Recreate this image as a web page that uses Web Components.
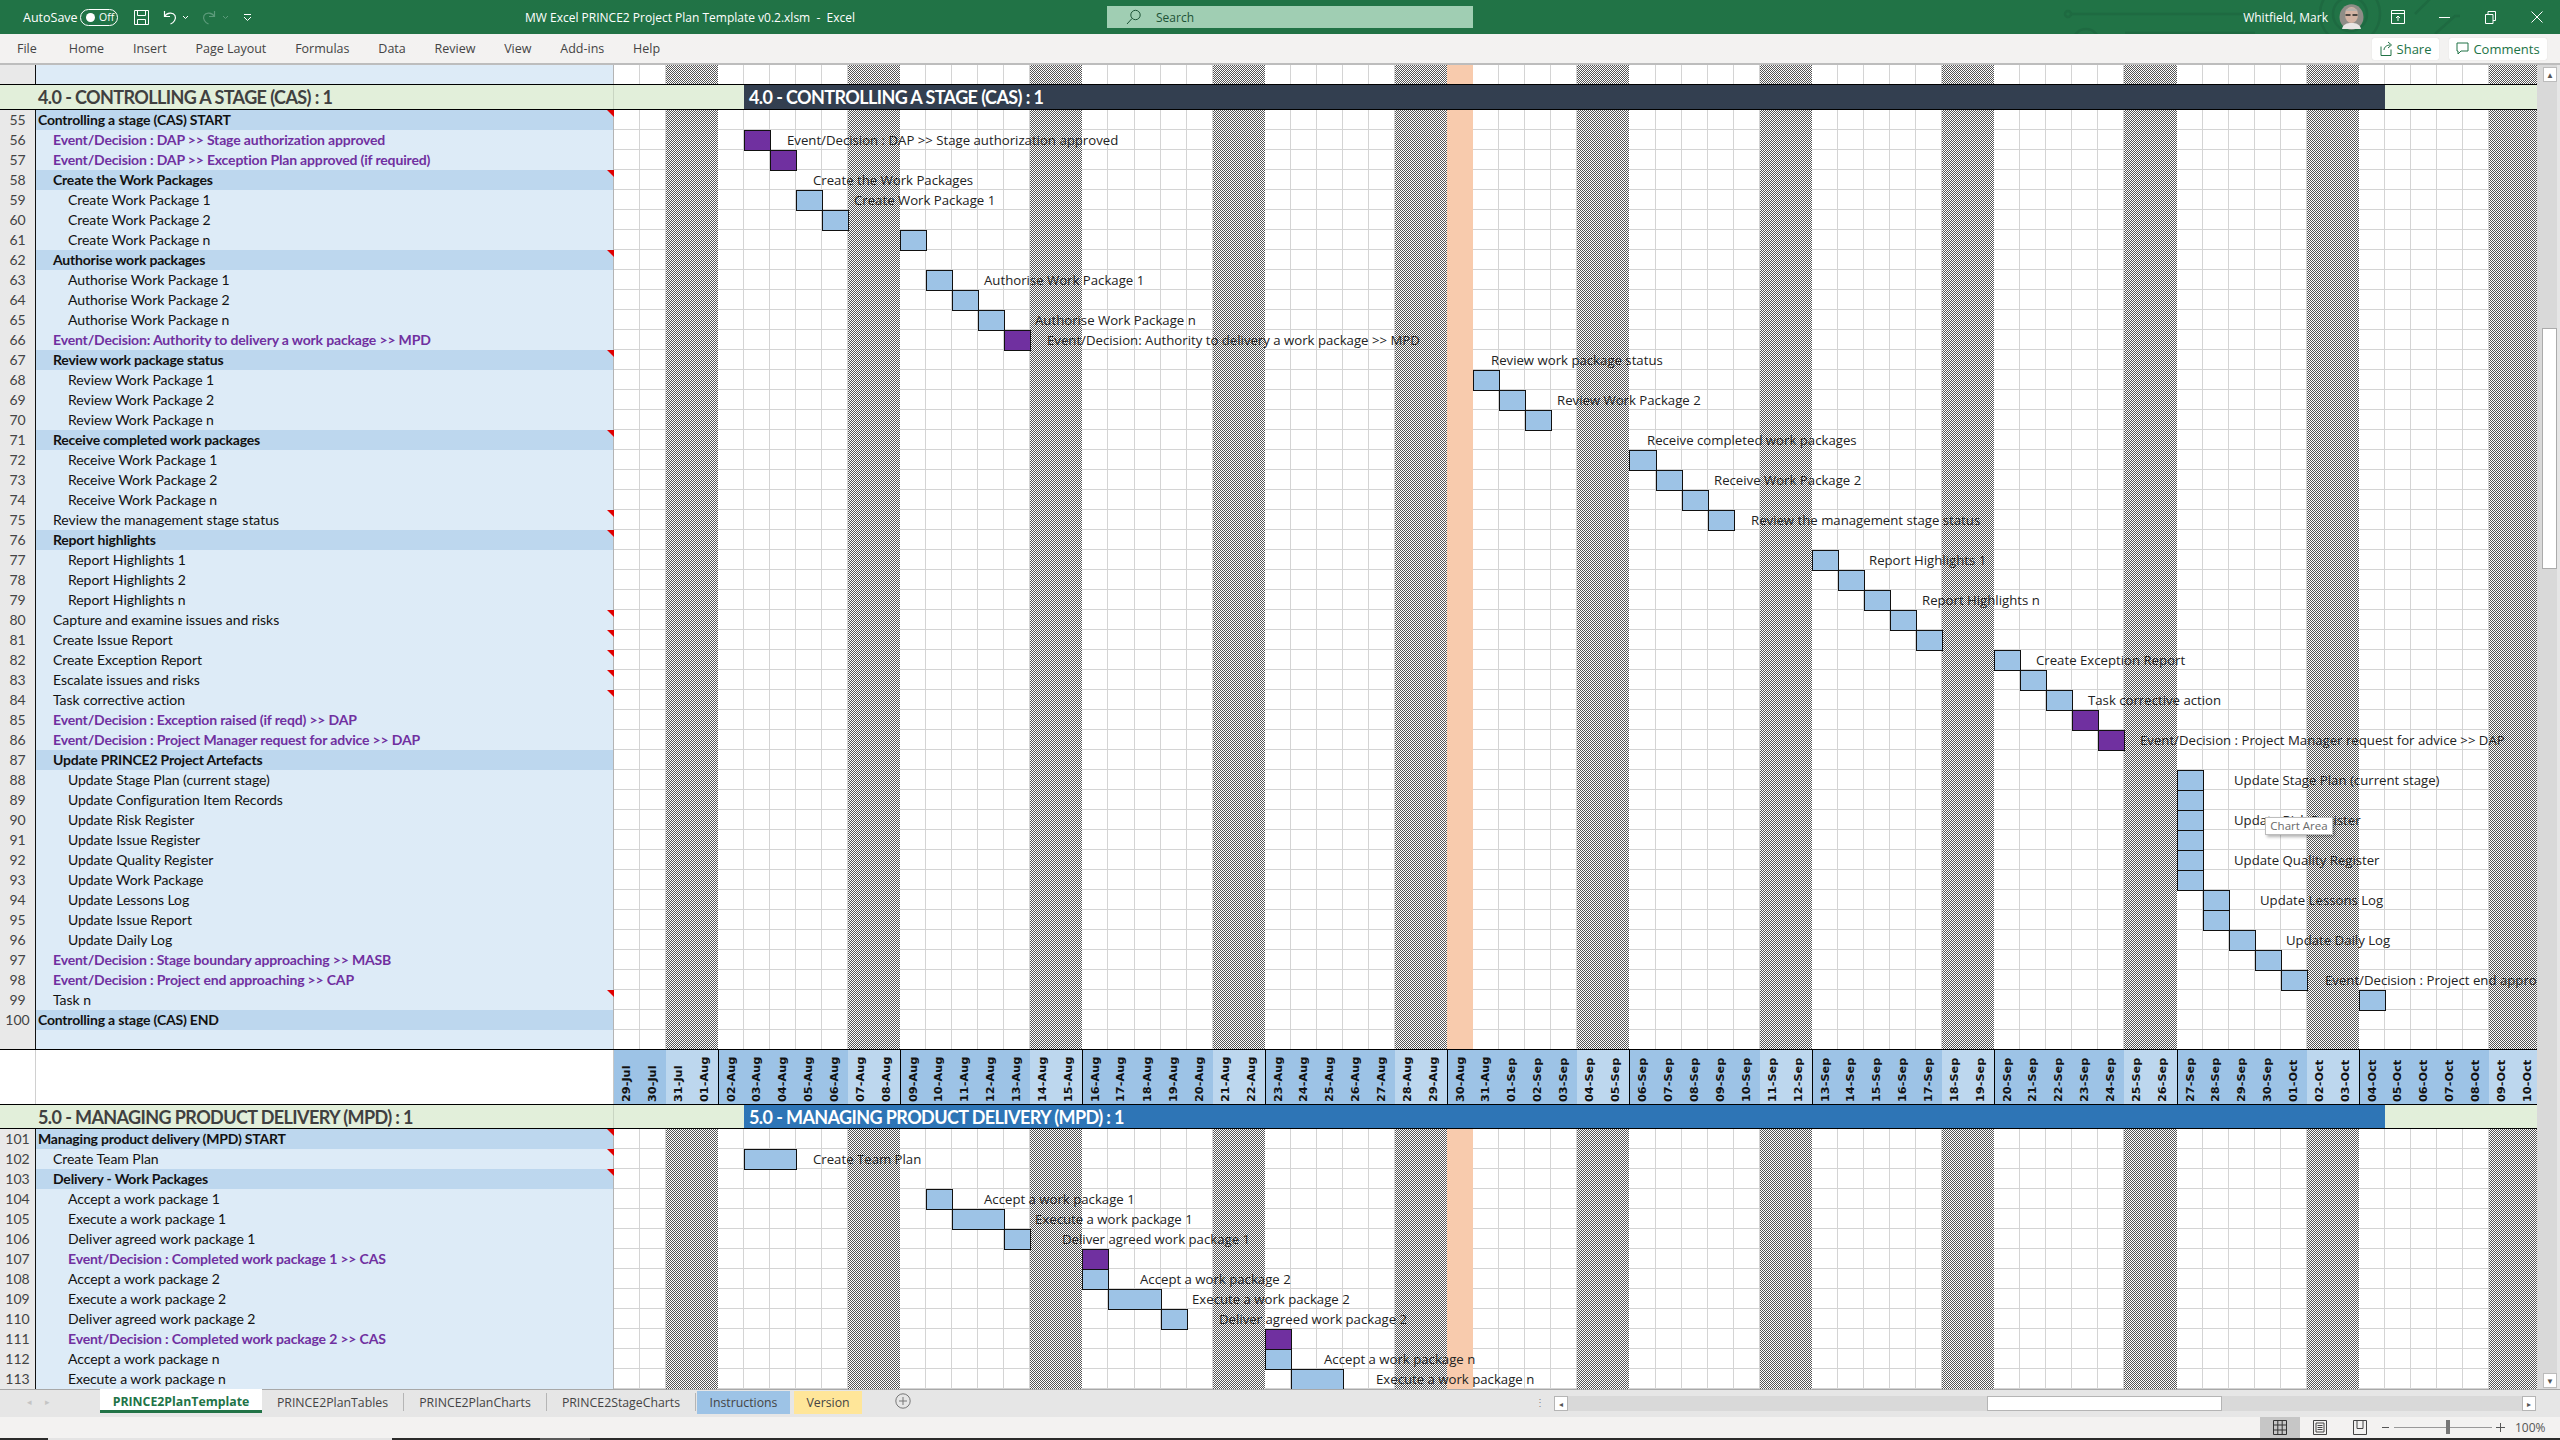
<!DOCTYPE html>
<html>
<head>
<meta charset="utf-8">
<title>MW Excel PRINCE2 Project Plan Template</title>
<style>
  html, body { margin: 0; padding: 0; width: 2560px; height: 1440px; overflow: hidden; background: #f3f2f1; }
  body { font-family: "Open Sans", sans-serif; display: flex; flex-direction: column; }
</style>
</head>
<body>
<script>
// column edges of the gantt grid, excel rounds these a bit unevenly
const COL_W = 26.05, COL_X0 = 613.5, COL_COUNT = 74;
const colTracks = [];
for (let i = 0; i < COL_COUNT; i++) {
  colTracks.push(Math.round(COL_X0 + (i + 1) * COL_W) - Math.round(COL_X0 + i * COL_W) + 'px');
}
const TRACKS = colTracks.join(' ');
const isWeekend = i => i % 7 === 2 || i % 7 === 3;
const GREY = 'repeating-conic-gradient(#555 0 25%, #fff 0 50%) 0 0 / 2px 2px';

function shadow(el, html) {
  el.attachShadow({ mode: 'open' }).innerHTML = html;
}

class ExcelTitlebar extends HTMLElement {
  constructor() {
    super();
    shadow(this, `<style>
      :host { display: flex; align-items: center; height: 34px; background: #217346; color: #fff; position: relative; flex: none; font: 12.5px "Open Sans", sans-serif; }
      .auto { margin-left: 23px; width: 57px; }
      .toggle { width: 36px; height: 15px; border: 1px solid #fff; border-radius: 9px; display: flex; align-items: center; font-size: 10.5px; }
      .toggle i { width: 9px; height: 9px; border-radius: 50%; background: #fff; margin: 0 4px 0 5px; }
      svg { display: block; flex: none; }
      .title { margin-left: 273px; width: 582px; white-space: pre; font-size: 12px; }
      .search { margin-left: 0; width: 366px; height: 22px; background: #a0ceb3; color: #1d5236; display: flex; align-items: center; font-size: 12px; }
      .search svg { margin: 0 14px 0 19px; }
      .user { margin-left: auto; font-size: 12px; white-space: nowrap; }
      .deco { position: absolute; left: 2040px; top: 0; }
      .right { display: flex; align-items: center; position: relative; margin-left: auto; }
      .avatar { margin-left: 11px; }
    </style>
    <span class="auto">AutoSave</span>
    <span class="toggle"><i></i>Off</span>
    <svg style="margin-left:15px" width="17" height="17" viewBox="0 0 17 17" fill="none" stroke="#fff"><path d="M1.5 1.5h14v14h-14z M4.5 1.5v5h8v-5 M4.5 15.5v-5h8v5"/></svg>
    <svg style="margin-left:11px" width="17" height="17" viewBox="0 0 17 17" fill="none" stroke="#fff" stroke-width="1.2"><path d="M3.5 2v5.5H9 M3.5 7.5C6 3.500 12 3 14 6.500c1.500 3.500-1 7-4.500 8.500"/></svg>
    <svg style="margin-left:4px" width="7" height="5" viewBox="0 0 7 5" fill="none" stroke="#fff"><path d="M1 1l2.500 2.500L6 1"/></svg>
    <svg style="margin-left:12px" width="17" height="17" viewBox="0 0 17 17" fill="none" stroke="#5d9b7b" stroke-width="1.2"><path d="M13.500 2v5.500H8 M13.500 7.500C11 3.500 5 3 3 6.500c-1.500 3.500 1 7 4.500 8.500"/></svg>
    <svg style="margin-left:4px" width="7" height="5" viewBox="0 0 7 5" fill="none" stroke="#5d9b7b"><path d="M1 1l2.500 2.500L6 1"/></svg>
    <svg style="margin-left:14px" width="9" height="9" viewBox="0 0 9 9" fill="none" stroke="#fff"><path d="M1 1.500h7 M1 4l3.500 3.500L8 4"/></svg>
    <span class="title">MW Excel PRINCE2 Project Plan Template v0.2.xlsm  -  Excel</span>
    <div class="search">
      <svg width="16" height="16" viewBox="0 0 16 16" fill="none" stroke="#1d5236"><circle cx="9.500" cy="6" r="4.700"/><path d="M6 9.500L1 15"/></svg>Search
    </div>
    <svg class="deco" width="420" height="34" viewBox="0 0 420 34" fill="none" stroke="#1e6a41" stroke-width="2.500">
      <circle cx="28" cy="14" r="3"/><path d="M31 14H210"/><circle cx="46" cy="42" r="13"/><path d="M85 33h130"/><circle cx="310" cy="14" r="30"/><circle cx="310" cy="14" r="17"/><path d="M395 34l20-18h10 M375 14l20-20"/>
    </svg>
    <div class="right">
      <span class="user">Whitfield, Mark</span>
      <svg class="avatar" width="25" height="26" viewBox="0 0 25 26">
        <ellipse cx="12.500" cy="13" rx="12" ry="12.800" fill="#8f8d87"/>
        <ellipse cx="12.500" cy="11" rx="6.500" ry="8" fill="#d3b3a3"/>
        <path d="M6 8c1-5 12-5 13 0l-1-1H7z" fill="#b5b0aa"/>
        <path d="M6.500 10h5v2h-5zM13.500 10h5v2h-5z" fill="#4b4642"/>
        <path d="M3 25c1-5 5-6 9.500-6s8.500 1 9.500 6z" fill="#e8e6e4"/>
      </svg>
      <svg style="margin-left:27px" width="14" height="14" viewBox="0 0 14 14" fill="none" stroke="#fff"><path d="M.5.500h13v13H.5z M.5 3.500h13 M7 11V6 M5 8l2-2 2 2"/></svg>
      <svg style="margin-left:34px" width="11" height="11" viewBox="0 0 11 11" stroke="#fff"><path d="M0 5.500h11"/></svg>
      <svg style="margin-left:35px" width="11" height="13" viewBox="0 0 11 13" fill="none" stroke="#fff"><path d="M.5 3.500h7.500v9H.5z M3 3.500V.5h7.500v9H8"/></svg>
      <svg style="margin-left:35px;margin-right:17px" width="12" height="12" viewBox="0 0 12 12" stroke="#fff"><path d="M.5.500l11 11 M11.500.500l-11 11"/></svg>
    </div>`);
  }
}

class ExcelRibbon extends HTMLElement {
  constructor() {
    super();
    const tabs = ['File','Home','Insert','Page Layout','Formulas','Data','Review','View','Add-ins','Help'];
    shadow(this, `<style>
      :host { display: flex; align-items: center; height: 31px; box-sizing: border-box; background: #f3f2f1; border-bottom: 2px solid #bdbdbd; flex: none; font: 12.5px "Open Sans", sans-serif; color: #444; padding-left: 17px; }
      span.t { margin-right: 28.800px; }
      span.t:first-of-type { margin-right: 32px; }
      .btn { background: #fff; border-radius: 2px; height: 22px; display: flex; align-items: center; color: #217346; font-size: 13px; box-shadow: 0 0 1px #c8c8c8; justify-content: center; gap: 4px; }
      .share { margin-left: auto; width: 67px; }
      .comments { margin-left: 10px; margin-right: 13px; width: 98px; }
    </style>
    ${tabs.map(t => `<span class="t">${t}</span>`).join('')}
    <div class="btn share"><svg width="13" height="15" viewBox="0 0 13 15" fill="none" stroke="#217346"><path d="M1 5.500v9h10v-6 M4 9c0-3 3-5 6-5 M8 1l3.500 3L8 7"/></svg>Share</div>
    <div class="btn comments"><svg width="13" height="14" viewBox="0 0 13 14" fill="none" stroke="#217346"><path d="M1 1h11v8H5l-3 3V9H1z"/></svg>Comments</div>`);
  }
}

class SheetView extends HTMLElement {
  constructor() {
    super();
    shadow(this, `<style>
      :host { display: flex; height: 1324px; flex: none; position: relative; overflow: hidden; }
      .main { width: 2537px; flex: none; display: flex; flex-direction: column; overflow: hidden; background: #fff; }
    </style>
    <div class="main"><slot></slot></div>
    <slot name="scroll"></slot>
    <slot name="over"></slot>`);
  }
}

class PlanBlock extends HTMLElement {
  constructor() {
    super();
    shadow(this, `<style>
      :host { display: flex; flex: none; }
      .tasks { width: 614px; flex: none; display: flex; flex-direction: column; }
    </style>
    <div class="tasks"><slot name="tasks"></slot></div>
    <slot></slot>`);
  }
}

class TaskRow extends HTMLElement {
  constructor() {
    super();
    shadow(this, `<style>
      :host { display: flex; height: 20px; flex: none; font: 14px Lato, sans-serif; letter-spacing: -.05px; color: #111; background: #ddebf7; position: relative; }
      :host([short]) { height: 19px; }
      :host([kind=band]) { background: #bdd7ee; font-weight: 700; letter-spacing: -.2px; }
      :host([kind=event]) { color: #7030a0; font-weight: 700; letter-spacing: -.16px; }
      .num { width: 36px; box-sizing: border-box; flex: none; background: #e9e9e9; border-right: 1px solid #111; text-align: center; color: #444; font-weight: 400; line-height: 20px; letter-spacing: 0; }
      .txt { line-height: 20px; white-space: nowrap; }
      .flag { position: absolute; right: 0; top: 0; width: 0; height: 0; border-top: 7px solid #e00000; border-left: 7px solid transparent; }
      .edge { position: absolute; right: 0; top: 0; bottom: 0; width: 1px; background: #b4b4b4; }
    </style><div class="num"></div><div class="txt"></div><div class="edge"></div>`);
  }
  connectedCallback() {
    const s = this.shadowRoot;
    s.querySelector('.num').textContent = this.getAttribute('num') || '';
    const txt = s.querySelector('.txt');
    txt.textContent = this.getAttribute('text') || '';
    txt.style.paddingLeft = [2, 17, 32][+this.getAttribute('level') || 0] + 'px';
    if (this.hasAttribute('flag')) {
      const f = document.createElement('div');
      f.className = 'flag';
      s.appendChild(f);
    }
  }
}

class GanttChart extends HTMLElement {
  constructor() {
    super();
    shadow(this, `<style>
      :host { display: block; flex: none; width: 1923px; overflow: hidden; }
      .g { display: grid; position: relative; grid-template-columns: ${TRACKS}; font: 13.200px "Open Sans", sans-serif; color: #222;
           background: repeating-linear-gradient(#fff 0 19px, #d4d4d4 19px 20px); }
      .c { grid-row: 1 / -1; box-sizing: border-box; border-right: 1px solid #d4d4d4; }
      .w { background: ${GREY}; border: 0; }
      .h { background: #f8cbad; border: 0; }
    </style><div class="g"><slot></slot></div>`);
  }
  connectedCallback() {
    const g = this.shadowRoot.querySelector('.g');
    const rows = +this.getAttribute('rows') || 0;
    const tail = +this.getAttribute('tail') || 0;
    g.style.gridTemplateRows = (rows ? `repeat(${rows}, 20px)` : '') + (tail ? ` ${tail}px` : '');
    for (let i = 0; i < COL_COUNT; i++) {
      const c = document.createElement('div');
      c.className = 'c' + (isWeekend(i) ? ' w' : i === 32 ? ' h' : '');
      c.style.gridColumn = i + 1;
      g.insertBefore(c, g.firstChild);
    }
  }
}

class GanttBar extends HTMLElement {
  constructor() {
    super();
    shadow(this, `<style>
      :host { display: block; box-sizing: border-box; background: #9dc3e6; border: 1px solid #111; margin: 0 -1px -1px 0; position: relative; }
      :host([kind=event]) { background: #7030a0; }
    </style>`);
  }
  connectedCallback() {
    const s = +this.getAttribute('start'), len = +this.getAttribute('len') || 1;
    this.style.gridRow = this.getAttribute('row');
    this.style.gridColumn = `${s + 1} / span ${len}`;
  }
}

class GanttLabel extends HTMLElement {
  constructor() {
    super();
    shadow(this, `<style>
      :host { display: block; white-space: nowrap; line-height: 20px; position: relative; }
    </style><slot></slot>`);
  }
  connectedCallback() {
    this.style.gridRow = this.getAttribute('row');
    this.style.gridColumn = '1 / -1';
    this.style.paddingLeft = (+this.getAttribute('x') - 614) + 'px';
  }
}

class SectionHead extends HTMLElement {
  constructor() {
    super();
    shadow(this, `<style>
      :host { display: flex; flex: none; box-sizing: border-box; width: 2537px; height: 26px; background: #e2efda; border-top: 1px solid #000; border-bottom: 1px solid #000; font: 700 18px Lato, sans-serif; letter-spacing: -.6px; overflow: hidden; }
      :host([short]) { height: 25px; }
      .l { width: 614px; box-sizing: border-box; flex: none; padding-left: 38px; color: #404040; border-right: 1px solid #c9d5c2; white-space: nowrap; line-height: 25px; }
      .g { display: grid; grid-template-columns: ${TRACKS}; flex: none; }
      .b { grid-column: 6 / span 63; color: #fff; padding-left: 5px; white-space: nowrap; line-height: 25px; }
    </style><div class="l"></div><div class="g"><div class="b"></div></div>`);
  }
  connectedCallback() {
    const s = this.shadowRoot, t = this.getAttribute('text');
    s.querySelector('.l').textContent = t;
    const b = s.querySelector('.b');
    b.textContent = t;
    b.style.background = this.getAttribute('color');
  }
}

class DateHead extends HTMLElement {
  constructor() {
    super();
    shadow(this, `<style>
      :host { display: flex; flex: none; box-sizing: border-box; width: 2537px; height: 55px; background: #fff; border-top: 1px solid #000; overflow: hidden; }
      .l { width: 614px; box-sizing: border-box; flex: none; border-right: 1px solid #c8c8c8; }
      .l div { width: 36px; height: 100%; box-sizing: border-box; border-right: 1px solid #d0d0d0; }
      .g { display: grid; grid-template-columns: ${TRACKS}; grid-template-rows: 54px; flex: none; font: 700 11.300px "DejaVu Sans", sans-serif; color: #111; }
      .d { background: #9dc3e6; box-sizing: border-box; overflow: hidden; }
      .d.w { background: #bdd7ee; }
      .d.s { border-left: 1px solid #000; }
      .d span { display: block; writing-mode: vertical-rl; transform: rotate(180deg); height: 54px; width: 100%; line-height: 26px; padding-top: 2px; box-sizing: border-box; white-space: nowrap; }
    </style><div class="l"><div></div></div><div class="g"></div>`);
  }
  connectedCallback() {
    const g = this.shadowRoot.querySelector('.g');
    const months = [['Jul', 29, 31], ['Aug', 1, 31], ['Sep', 1, 30], ['Oct', 1, 10]];
    let i = 0;
    months.forEach(([m, a, b]) => {
      for (let d = a; d <= b; d++, i++) {
        const c = document.createElement('div');
        c.className = 'd' + (isWeekend(i) ? ' w' : '') + (i % 7 === 4 ? ' s' : '');
        const sp = document.createElement('span');
        sp.textContent = String(d).padStart(2, '0') + '-' + m;
        c.appendChild(sp);
        g.appendChild(c);
      }
    });
  }
}

class VScroll extends HTMLElement {
  constructor() {
    super();
    shadow(this, `<style>
      :host { display: block; width: 23px; flex: none; background: linear-gradient(90deg, #d9d9d9 0 20px, #e6e6e6 20px); position: relative; }
      .b { position: absolute; left: 6px; width: 14px; height: 15px; box-sizing: border-box; background: #fff; border: 1px solid #bcbcbc; color: #555; font-size: 8px; line-height: 13px; text-align: center; }
      .up { top: 2px; } .dn { bottom: 1px; }
      .thumb { position: absolute; left: 5px; width: 15px; top: 263px; height: 241px; box-sizing: border-box; background: #fff; border: 1px solid #ababab; }
    </style><div class="b up">▲</div><div class="thumb"></div><div class="b dn">▼</div>`);
  }
}

class ChartTip extends HTMLElement {
  constructor() {
    super();
    shadow(this, `<style>
      :host { position: absolute; left: 2265px; top: 752px; width: 68px; height: 18px; box-sizing: border-box; background: #fff; border: 1px solid #bdbdbd; box-shadow: 2px 2px 3px rgba(0,0,0,.3); color: #6a6a6a; font: 11.500px "Open Sans", sans-serif; line-height: 16px; text-align: center; white-space: nowrap; }
    </style>Chart Area`);
  }
}

class SheetTabs extends HTMLElement {
  constructor() {
    super();
    shadow(this, `<style>
      :host { display: flex; height: 28px; box-sizing: border-box; flex: none; background: #e6e6e6; border-top: 1px solid #a8a8a8; font: 12.300px "Open Sans", sans-serif; color: #444; align-items: flex-start; }
      .nav { width: 100px; box-sizing: border-box; padding-left: 27px; color: #c4c4c4; font-size: 9px; line-height: 24px; word-spacing: 11px; }
      .tab { height: 22px; line-height: 24px; text-align: center; white-space: nowrap; box-sizing: border-box; margin-top: 1px; }
      .tab.on { height: 24px; margin-top: -1px; background: #fff; color: #217346; font-weight: 700; border-bottom: 3px solid #217346; width: 162px; line-height: 26px; }
      .sep { width: 1px; height: 18px; background: #b5b5b5; margin-top: 3px; }
      .plain1 { width: 141px; } .plain2 { width: 142px; } .plain3 { width: 148px; }
      .ins { background: #9dc3e6; width: 93px; margin-left: 1px; height: 23px; }
      .ver { background: #ffe699; width: 68px; margin-left: 4px; height: 23px; }
      svg { margin: 3px 0 0 33px; flex: none; }
      .dots { position: absolute; left: 1535px; color: #888; line-height: 24px; font-size: 10px; }
      .track { position: absolute; left: 1554px; width: 982px; height: 15px; margin-top: 6px; background: #d9d9d9; }
      .track i { position: absolute; top: 0; height: 15px; box-sizing: border-box; background: #fff; border: 1px solid #b5b5b5; font: 8px/13px "Open Sans", sans-serif; color: #555; text-align: center; }
    </style>
    <div class="nav">◂ ▸</div>
    <div class="tab on">PRINCE2PlanTemplate</div>
    <div class="tab plain1">PRINCE2PlanTables</div><div class="sep"></div>
    <div class="tab plain2">PRINCE2PlanCharts</div><div class="sep"></div>
    <div class="tab plain3">PRINCE2StageCharts</div><div class="sep"></div>
    <div class="tab ins">Instructions</div>
    <div class="tab ver">Version</div>
    <svg width="16" height="16" viewBox="0 0 16 16" fill="none" stroke="#777"><circle cx="8" cy="8" r="7.200"/><path d="M8 4v8M4 8h8"/></svg>
    <div class="dots">⋮</div>
    <div class="track">
      <i style="left:0;width:14px">◂</i>
      <i style="left:433px;width:235px"></i>
      <i style="left:968px;width:14px">▸</i>
    </div>`);
  }
}

class StatusBar extends HTMLElement {
  constructor() {
    super();
    shadow(this, `<style>
      :host { display: flex; height: 21px; flex: none; background: #f3f2f1; align-items: center; font: 12px "Open Sans", sans-serif; color: #555; padding-left: 2260px; box-sizing: border-box; }
      .sel { width: 40px; height: 21px; background: #c6c6c6; display: flex; align-items: center; justify-content: center; }
      .slider { width: 98px; height: 1px; background: #999; margin: 0 4px; position: relative; }
      .slider i { position: absolute; left: 52px; top: -7px; width: 4px; height: 14px; background: #777; }
      .pct { margin-left: 10px; }
      svg { display: block; flex: none; }
    </style>
    <div class="sel"><svg width="14" height="15" viewBox="0 0 14 15" fill="none" stroke="#333"><path d="M.5.500h13v14H.5z M.5 5h13 M.5 10h13 M4.800.500v14 M9.200.500v14"/></svg></div>
    <svg style="margin-left:13px" width="14" height="15" viewBox="0 0 14 15" fill="none" stroke="#444"><path d="M.5.500h13v14H.5z M3 3h8v9H3z M4.500 5.500h5 M4.500 7.500h5 M4.500 9.500h5"/></svg>
    <svg style="margin-left:26px" width="14" height="15" viewBox="0 0 14 15" fill="none" stroke="#444"><path d="M.5.500h13v14H.5z M4 .500v8h6v-8"/></svg>
    <svg style="margin-left:14px" width="9" height="9" viewBox="0 0 9 9" stroke="#555"><path d="M1 4.500h7"/></svg>
    <div class="slider"><i></i></div>
    <svg style="margin-left:0" width="9" height="9" viewBox="0 0 9 9" stroke="#555"><path d="M0 4.500h9M4.500 0v9"/></svg>
    <span class="pct">100%</span>`);
  }
}

class TaskBar extends HTMLElement {
  constructor() {
    super();
    shadow(this, `<style>
      :host { display: block; height: 2px; flex: none; background: linear-gradient(90deg, #2b2b2b 0 48px, #e4e4e4 48px 392px, #2b2b2b 392px 540px, #5a5a5a 540px 590px, #2b2b2b 590px); }
    </style>`);
  }
}

[['excel-titlebar', ExcelTitlebar], ['excel-ribbon', ExcelRibbon], ['sheet-view', SheetView], ['plan-block', PlanBlock],
 ['task-row', TaskRow], ['gantt-chart', GanttChart], ['gantt-bar', GanttBar], ['gantt-label', GanttLabel],
 ['section-head', SectionHead], ['date-head', DateHead], ['v-scroll', VScroll], ['chart-tip', ChartTip],
 ['sheet-tabs', SheetTabs], ['status-bar', StatusBar], ['task-bar', TaskBar]].forEach(([n, c]) => customElements.define(n, c));

// [num, level, kind, flag, text]
const plan4 = [
  [55,0,'band',1,'Controlling a stage (CAS) START'],
  [56,1,'event',0,'Event/Decision : DAP >> Stage authorization approved'],
  [57,1,'event',0,'Event/Decision : DAP >> Exception Plan approved (if required)'],
  [58,1,'band',1,'Create the Work Packages'],
  [59,2,'',0,'Create Work Package 1'],
  [60,2,'',0,'Create Work Package 2'],
  [61,2,'',0,'Create Work Package n'],
  [62,1,'band',1,'Authorise work packages'],
  [63,2,'',0,'Authorise Work Package 1'],
  [64,2,'',0,'Authorise Work Package 2'],
  [65,2,'',0,'Authorise Work Package n'],
  [66,1,'event',0,'Event/Decision: Authority to delivery a work package >> MPD'],
  [67,1,'band',1,'Review work package status'],
  [68,2,'',0,'Review Work Package 1'],
  [69,2,'',0,'Review Work Package 2'],
  [70,2,'',0,'Review Work Package n'],
  [71,1,'band',1,'Receive completed work packages'],
  [72,2,'',0,'Receive Work Package 1'],
  [73,2,'',0,'Receive Work Package 2'],
  [74,2,'',0,'Receive Work Package n'],
  [75,1,'',1,'Review the management stage status'],
  [76,1,'band',1,'Report highlights'],
  [77,2,'',0,'Report Highlights 1'],
  [78,2,'',0,'Report Highlights 2'],
  [79,2,'',0,'Report Highlights n'],
  [80,1,'',1,'Capture and examine issues and risks'],
  [81,1,'',1,'Create Issue Report'],
  [82,1,'',1,'Create Exception Report'],
  [83,1,'',1,'Escalate issues and risks'],
  [84,1,'',1,'Task corrective action'],
  [85,1,'event',0,'Event/Decision : Exception raised (if reqd) >> DAP'],
  [86,1,'event',0,'Event/Decision : Project Manager request for advice >> DAP'],
  [87,1,'band',0,'Update PRINCE2 Project Artefacts'],
  [88,2,'',0,'Update Stage Plan (current stage)'],
  [89,2,'',0,'Update Configuration Item Records'],
  [90,2,'',0,'Update Risk Register'],
  [91,2,'',0,'Update Issue Register'],
  [92,2,'',0,'Update Quality Register'],
  [93,2,'',0,'Update Work Package'],
  [94,2,'',0,'Update Lessons Log'],
  [95,2,'',0,'Update Issue Report'],
  [96,2,'',0,'Update Daily Log'],
  [97,1,'event',0,'Event/Decision : Stage boundary approaching >> MASB'],
  [98,1,'event',0,'Event/Decision : Project end approaching >> CAP'],
  [99,1,'',1,'Task n'],
  [100,0,'band',0,'Controlling a stage (CAS) END']
];
const plan5 = [
  [101,0,'band',1,'Managing product delivery (MPD) START'],
  [102,1,'',1,'Create Team Plan'],
  [103,1,'band',1,'Delivery - Work Packages'],
  [104,2,'',0,'Accept a work package 1'],
  [105,2,'',0,'Execute a work package 1'],
  [106,2,'',0,'Deliver agreed work package 1'],
  [107,2,'event',0,'Event/Decision : Completed work package 1 >> CAS'],
  [108,2,'',0,'Accept a work package 2'],
  [109,2,'',0,'Execute a work package 2'],
  [110,2,'',0,'Deliver agreed work package 2'],
  [111,2,'event',0,'Event/Decision : Completed work package 2 >> CAS'],
  [112,2,'',0,'Accept a work package n'],
  [113,2,'',0,'Execute a work package n']
];
// [num, start col, length, kind]
const bars4 = [[56,5,1,'event'],[57,6,1,'event'],[59,7,1],[60,8,1],[61,11,1],[63,12,1],[64,13,1],[65,14,1],[66,15,1,'event'],
  [68,33,1],[69,34,1],[70,35,1],[72,39,1],[73,40,1],[74,41,1],[75,42,1],[77,46,1],[78,47,1],[79,48,1],[80,49,1],[81,50,1],
  [82,53,1],[83,54,1],[84,55,1],[85,56,1,'event'],[86,57,1,'event'],[88,60,1],[89,60,1],[90,60,1],[91,60,1],[92,60,1],[93,60,1],
  [94,61,1],[95,61,1],[96,62,1],[97,63,1],[98,64,1],[99,67,1]];
const bars5 = [[102,5,2],[104,12,1],[105,13,2],[106,15,1],[107,18,1,'event'],[108,18,1],[109,19,2],[110,21,1],[111,25,1,'event'],[112,25,1],[113,26,2]];
// [num, x, text]
const labels4 = [[56,787,'Event/Decision : DAP >> Stage authorization approved'],[58,813,'Create the Work Packages'],[59,854,'Create Work Package 1'],
  [63,984,'Authorise Work Package 1'],[65,1035,'Authorise Work Package n'],[66,1047,'Event/Decision: Authority to delivery a work package >> MPD'],
  [67,1491,'Review work package status'],[69,1557,'Review Work Package 2'],[71,1647,'Receive completed work packages'],[73,1714,'Receive Work Package 2'],
  [75,1751,'Review the management stage status'],[77,1869,'Report Highlights 1'],[79,1922,'Report Highlights n'],[82,2036,'Create Exception Report'],
  [84,2088,'Task corrective action'],[86,2140,'Event/Decision : Project Manager request for advice >> DAP'],[88,2234,'Update Stage Plan (current stage)'],
  [90,2234,'Update Risk Register'],[92,2234,'Update Quality Register'],[94,2260,'Update Lessons Log'],[96,2286,'Update Daily Log'],
  [98,2325,'Event/Decision : Project end approaching >> CAP']];
const labels5 = [[102,813,'Create Team Plan'],[104,984,'Accept a work package 1'],[105,1035,'Execute a work package 1'],[106,1062,'Deliver agreed work package 1'],
  [108,1140,'Accept a work package 2'],[109,1192,'Execute a work package 2'],[110,1219,'Deliver agreed work package 2'],[112,1324,'Accept a work package n'],[113,1376,'Execute a work package n']];

function el(tag, attrs, text) {
  const e = document.createElement(tag);
  for (const k in attrs) e.setAttribute(k, attrs[k]);
  if (text) e.textContent = text;
  return e;
}

function buildBlock(rows, bars, labels, first, tail) {
  const block = el('plan-block', {});
  rows.forEach(([num, level, kind, flag, text]) => {
    const a = { num, level, text, slot: 'tasks' };
    if (kind) a.kind = kind;
    if (flag) a.flag = '';
    block.appendChild(el('task-row', a));
  });
  if (tail) block.appendChild(el('task-row', { slot: 'tasks', short: '' }));
  const chartAttrs = { rows: rows.length };
  if (tail) chartAttrs.tail = tail;
  const chart = el('gantt-chart', chartAttrs);
  bars.forEach(([num, start, len, kind]) => {
    const a = { row: num - first + 1, start, len };
    if (kind) a.kind = kind;
    chart.appendChild(el('gantt-bar', a));
  });
  labels.forEach(([num, x, t]) => chart.appendChild(el('gantt-label', { row: num - first + 1, x }, t)));
  block.appendChild(chart);
  return block;
}

const sheet = el('sheet-view', {});
const topStrip = el('plan-block', {});
topStrip.appendChild(el('task-row', { slot: 'tasks', short: '' }));
topStrip.appendChild(el('gantt-chart', { tail: 19 }));
sheet.appendChild(topStrip);
sheet.appendChild(el('section-head', { text: '4.0 - CONTROLLING A STAGE (CAS) : 1', color: '#333f50' }));
sheet.appendChild(buildBlock(plan4, bars4, labels4, 55, 19));
sheet.appendChild(el('date-head', {}));
sheet.appendChild(el('section-head', { text: '5.0 - MANAGING PRODUCT DELIVERY (MPD) : 1', color: '#2e75b6', short: '' }));
sheet.appendChild(buildBlock(plan5, bars5, labels5, 101, 0));
sheet.appendChild(el('v-scroll', { slot: 'scroll' }));
sheet.appendChild(el('chart-tip', { slot: 'over' }));

document.body.append(el('excel-titlebar', {}), el('excel-ribbon', {}), sheet, el('sheet-tabs', {}), el('status-bar', {}), el('task-bar', {}));
</script>
</body>
</html>
